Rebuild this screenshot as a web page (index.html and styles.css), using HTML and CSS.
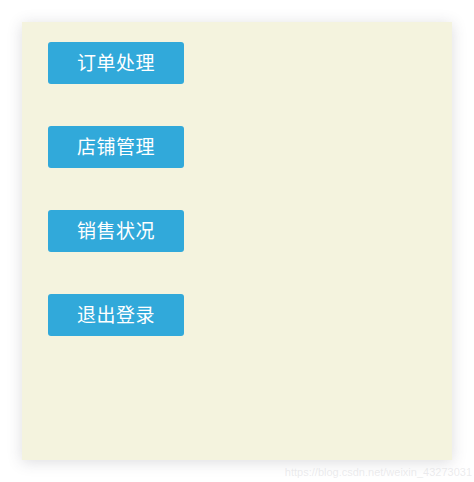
FILE: index.html
```html
<!DOCTYPE html>
<html lang="zh-CN">
<head>
  <meta charset="UTF-8">
  <meta name="viewport" content="width=device-width, initial-scale=1.0">
  <title>商家后台</title>
  <link rel="stylesheet" href="styles.css">
</head>
<body>
  <div class="panel">
    <button class="menu-btn">订单处理</button>
    <button class="menu-btn">店铺管理</button>
    <button class="menu-btn">销售状况</button>
    <button class="menu-btn">退出登录</button>
  </div>
  <div class="watermark">https://blog.csdn.net/weixin_43273031</div>
</body>
</html>
```

FILE: styles.css
```css
:root {
  --panel-bg: #f4f3de;
  --btn-bg: #31a9da;
}

body {
  margin: 0;
  padding: 22px 22px 0 22px;
  background-color: #ffffff;
  font-family: 'Noto Sans CJK SC', 'Noto Sans', sans-serif;
  position: relative;
  height: 482px;
  box-sizing: border-box;
}

.panel {
  width: 430px;
  height: 438px;
  background-color: var(--panel-bg);
  box-shadow: 0 2px 14px rgba(60, 60, 80, 0.18);
  padding: 20px 26px;
  box-sizing: border-box;
  display: flex;
  flex-direction: column;
  align-items: flex-start;
  gap: 42px;
}

.menu-btn {
  width: 136px;
  height: 42px;
  border: none;
  border-radius: 3px;
  background-color: var(--btn-bg);
  color: #ffffff;
  font-family: inherit;
  font-size: 19px;
  font-weight: 400;
  line-height: 1;
  letter-spacing: 0.5px;
  cursor: pointer;
  padding: 0 0 3px 0;
}

.watermark {
  position: absolute;
  right: 2px;
  bottom: 4px;
  font-family: 'Liberation Sans', sans-serif;
  font-size: 11px;
  color: rgba(200, 200, 205, 0.35);
}
```
